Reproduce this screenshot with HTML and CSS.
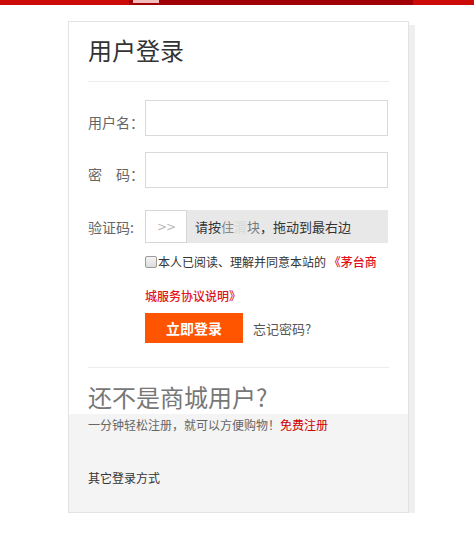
FILE: index.html
```html
<!DOCTYPE html>
<html lang="zh-CN">
<head>
<meta charset="utf-8">
<title>用户登录</title>
<link rel="stylesheet" href="styles.css">
</head>
<body>
<div class="topbar">
  <div class="topbar-inner"><span class="topbar-tab"></span></div>
</div>
<div class="card">
  <div class="card-main">
    <h1 class="title">用户登录</h1>
    <div class="divider"></div>
    <div class="row row-first">
      <label class="label">用户名：</label>
      <input class="field" type="text">
    </div>
    <div class="row">
      <label class="label">密&emsp;码：</label>
      <input class="field" type="password">
    </div>
    <div class="row row-captcha">
      <label class="label">验证码:</label>
      <div class="slider">
        <div class="handle">&gt;&gt;</div>
        <div class="slider-text">请按<span class="dim1">住</span><span class="dim2">滑</span><span class="dim3">块</span>，拖动到最右边</div>
      </div>
    </div>
    <div class="agree">
      <div class="agree-line"><span class="checkbox"></span>本人已阅读、理解并同意本站的 <a class="red-link">《茅台商</a></div>
      <div class="agree-line"><a class="red-link">城服务协议说明》</a></div>
    </div>
    <div class="actions">
      <button class="btn">立即登录</button>
      <a class="forgot">忘记密码?</a>
    </div>
    <div class="divider divider-2"></div>
    <h2 class="sub-title">还不是商城用户?</h2>
  </div>
  <div class="card-foot">
    <p class="reg">一分钟轻松注册，就可以方便购物！<a class="reg-link">免费注册</a></p>
    <p class="other">其它登录方式</p>
  </div>
</div>
</body>
</html>
```
FILE: styles.css
```css
* { box-sizing: border-box; }
html, body {
  margin: 0;
  padding: 0;
  background: #fff;
  font-family: "Noto Sans CJK SC", "Liberation Sans", sans-serif;
  color: #333;
}
.topbar {
  height: 5px;
  background: #cc0a0a;
}
.topbar-inner {
  margin-left: 129px;
  width: 284px;
  height: 5px;
  background: #a10006;
  display: flex;
}
.topbar-tab {
  margin-left: 4px;
  width: 26px;
  height: 3px;
  background: #f2bcbc;
}
.card {
  margin: 16px 0 0 68px;
  width: 341px;
  height: 492px;
  border: 1px solid #e3e3e3;
  background: #fff;
  box-shadow: 6px 4px 0 #efefef;
  display: flex;
  flex-direction: column;
}
.card-main {
  padding: 12px 19px 0 19px;
}
.title {
  margin: 0;
  font-size: 24px;
  font-weight: normal;
  line-height: 32px;
  color: #333;
}
.divider {
  height: 1px;
  background: #ececec;
  margin-top: 15px;
}
.row {
  display: flex;
  align-items: center;
  margin-top: 16px;
}
.row-first { margin-top: 18px; }
.row-captcha { margin-top: 22px; }
.label {
  width: 57px;
  font-size: 14px;
  color: #666;
  padding-top: 8px;
  line-height: 20px;
}
.row-captcha .label { padding-top: 1px; }
.field {
  width: 243px;
  height: 36px;
  border: 1px solid #d9d9d9;
  background: #fff;
  margin: 0;
  outline: none;
}
.slider {
  width: 243px;
  height: 33px;
  background: #e8e8e8;
  display: flex;
  align-items: center;
}
.handle {
  width: 42px;
  height: 33px;
  background: #fff;
  border: 1px solid #d6d6d6;
  color: #bbb;
  font-size: 12px;
  letter-spacing: -1px;
  display: flex;
  align-items: center;
  justify-content: center;
  font-family: "DejaVu Sans", sans-serif;
}
.slider-text {
  margin-left: 8px;
  font-size: 13px;
  color: #333;
}
.dim1 { color: #888; }
.dim2 { color: #d8d8d8; }
.dim3 { color: #777; }
.agree {
  margin-left: 57px;
  margin-top: 2px;
  font-size: 12px;
  line-height: 34px;
  color: #333;
}
.agree-line {
  white-space: nowrap;
}
.checkbox {
  display: inline-block;
  width: 12px;
  height: 12px;
  border: 1px solid #9a9a9a;
  border-radius: 2px;
  background: linear-gradient(#f4f4f4, #dcdcdc);
  vertical-align: -1px;
  margin-right: 1px;
}
.red-link {
  color: #e0121a;
  font-weight: 500;
  text-decoration: none;
}
.actions {
  margin-left: 57px;
  margin-top: 0;
  display: flex;
  align-items: center;
}
.btn {
  width: 98px;
  height: 30px;
  border: none;
  margin: 0;
  background: #ff5400;
  color: #fff;
  font-family: "Noto Sans CJK SC", sans-serif;
  font-size: 14px;
  font-weight: bold;
  padding: 0;
}
.forgot {
  margin-left: 10px;
  font-size: 13px;
  color: #555;
}
.divider-2 {
  margin-top: 24px;
}
.sub-title {
  margin: 12px 0 0 0;
  font-size: 24px;
  font-weight: normal;
  line-height: 34px;
  color: #777;
}
.card-foot {
  flex: 1;
  background: #f4f4f4;
  padding: 0 19px;
}
.reg {
  margin: 2px 0 0 0;
  font-size: 12px;
  line-height: 18px;
  color: #666;
}
.reg-link {
  color: #cc0000;
  text-decoration: none;
}
.other {
  margin: 35px 0 0 0;
  font-size: 12px;
  line-height: 18px;
  color: #333;
}
```
